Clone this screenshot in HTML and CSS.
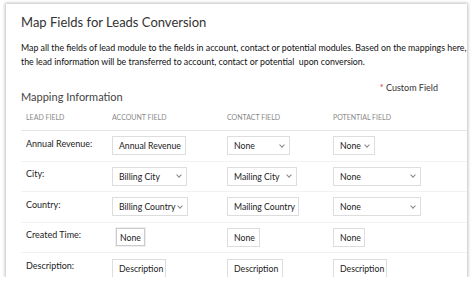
FILE: index.html
```html
<!DOCTYPE html>
<html lang="en">
<head>
    <meta charset="UTF-8">
    <title>Map Fields for Leads Conversion</title>
    <link rel="stylesheet" href="styles.css">
</head>
<body>
    <div class="card">
        <h1 class="title">Map Fields for Leads Conversion</h1>

        <p class="intro">Map all the fields of lead module to the fields in account, contact or potential modules. Based on the mappings here,<br>the lead information will be transferred to account, contact or potential &nbsp;upon conversion.</p>

        <div class="section-head">
            <h2>Mapping Information</h2>
            <div class="legend"><span class="star">*</span> Custom Field</div>
        </div>

        <div class="mapping">
            <div class="row head">
                <div>Lead Field</div>
                <div>Account Field</div>
                <div>Contact Field</div>
                <div>Potential Field</div>
            </div>

            <div class="row">
                <div class="label">Annual Revenue:</div>
                <div><span class="field" style="width: 74px">Annual Revenue</span></div>
                <div><span class="field" style="width: 63px">None <i class="caret"></i></span></div>
                <div><span class="field" style="width: 42px">None <i class="caret"></i></span></div>
            </div>

            <div class="row">
                <div class="label">City:</div>
                <div><span class="field" style="width: 75px">Billing City <i class="caret"></i></span></div>
                <div><span class="field" style="width: 70px">Mailing City <i class="caret"></i></span></div>
                <div><span class="field" style="width: 88px">None <i class="caret"></i></span></div>
            </div>

            <div class="row">
                <div class="label">Country:</div>
                <div><span class="field" style="width: 76px">Billing Country<i class="caret"></i></span></div>
                <div><span class="field" style="width: 72px">Mailing Country</span></div>
                <div><span class="field" style="width: 88px">None <i class="caret"></i></span></div>
            </div>

            <div class="row">
                <div class="label">Created Time:</div>
                <div><span class="field small" style="width: 29px">None</span></div>
                <div><span class="field" style="width: 33px">None</span></div>
                <div><span class="field" style="width: 32px">None</span></div>
            </div>

            <div class="row last">
                <div class="label">Description:</div>
                <div><span class="field" style="width: 54px">Description</span></div>
                <div><span class="field" style="width: 56px">Description</span></div>
                <div><span class="field" style="width: 54px">Description</span></div>
            </div>
        </div>
    </div>
</body>
</html>
```

FILE: styles.css
```css
body {
    margin: 0;
    background-color: #fff;
    font-family: Lato, "Open Sans", Arial, sans-serif;
    color: #222;
}

.card {
    margin: 4px 7px 0 6px;
    height: 273px;
    box-sizing: border-box;
    padding: 10px 0 0 15px;
    background-color: #fff;
    box-shadow: 0 0 3px 1px rgba(0, 0, 0, 0.25);
    overflow: hidden;
}

.title {
    margin: 0;
    font-size: 13px;
    font-weight: normal;
    color: #333;
    line-height: 16px;
}

.intro {
    margin: 11px 0 0;
    font-size: 8.8px;
    line-height: 14px;
    color: #111;
    white-space: nowrap;
}

.section-head {
    display: flex;
    justify-content: space-between;
    align-items: flex-start;
    margin-top: 12px;
    padding-right: 21px;
}

.section-head h2 {
    margin: 9px 0 0;
    font-size: 11px;
    line-height: 13px;
    font-weight: normal;
    color: #444;
}

.legend {
    font-size: 9px;
    line-height: 12px;
    color: #333;
    padding: 1px 8px 0 8px;
}

.star {
    color: #e03030;
}

.mapping {
    margin-top: 3px;
}

.row {
    display: grid;
    grid-template-columns: 86px 115px 106px 1fr;
    align-items: center;
    box-sizing: border-box;
    height: 30.5px;
    padding-left: 5px;
    border-bottom: 1px solid #f2f2f2;
    font-size: 8.7px;
}

.row.head {
    height: 25px;
    padding-bottom: 2px;
    border-bottom-color: #e4e4e4;
    font-size: 7px;
    text-transform: uppercase;
    color: #8a8a8a;
}

.row.last {
    border-bottom: none;
}

.label {
    color: #222;
    font-size: 9px;
    margin-top: -5px;
}

.field {
    display: inline-flex;
    align-items: center;
    box-sizing: border-box;
    height: 19px;
    padding: 0 5px 0 6px;
    border: 1px solid #ddd;
    background-color: #fff;
    color: #222;
    white-space: nowrap;
    overflow: hidden;
}

.field.small {
    height: 18px;
    margin-left: 4px;
    padding: 0 3px;
    border-color: #ccc;
    box-shadow: 0 0 0 1px #eee;
}

.caret {
    flex: none;
    width: 3px;
    height: 3px;
    margin-left: auto;
    border-right: 1px solid #888;
    border-bottom: 1px solid #888;
    transform: rotate(45deg);
    position: relative;
    top: -1px;
}
```
